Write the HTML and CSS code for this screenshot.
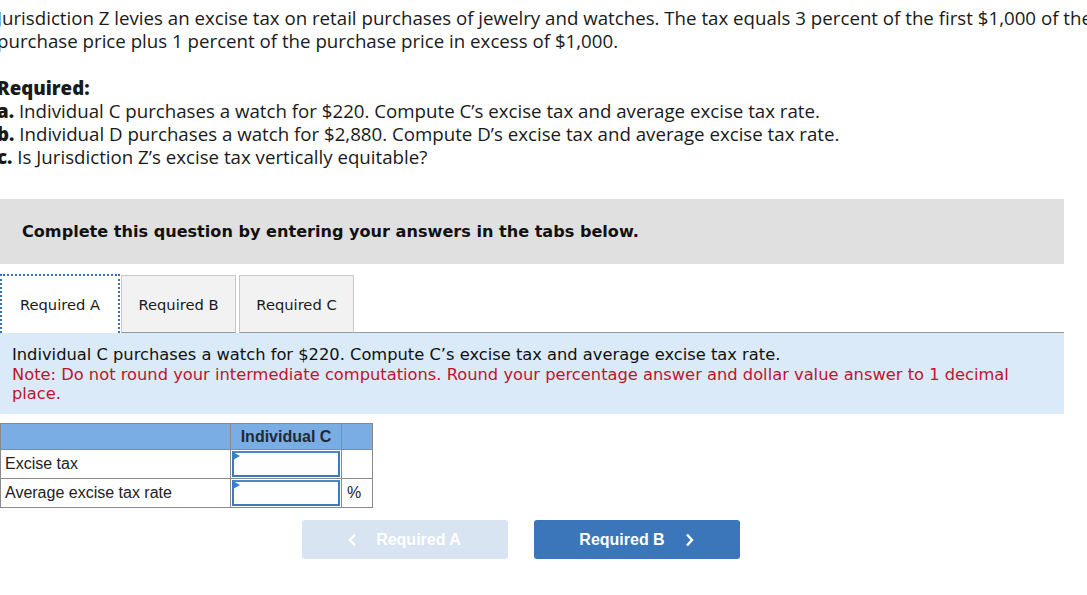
FILE: index.html
```html
<!DOCTYPE html>
<html>
<head>
<meta charset="utf-8">
<link rel="stylesheet" href="styles.css">
</head>
<body>
<div class="page">
  <div class="question">
    <p class="intro">Jurisdiction Z levies an excise tax on retail purchases of jewelry and watches. The tax equals 3 percent of the first $1,000 of the<br>purchase price plus 1 percent of the purchase price in excess of $1,000.</p>
    <p class="req">
      <strong>Required:</strong><br>
      <strong>a.</strong> Individual C purchases a watch for $220. Compute C’s excise tax and average excise tax rate.<br>
      <strong>b.</strong> Individual D purchases a watch for $2,880. Compute D’s excise tax and average excise tax rate.<br>
      <strong>c.</strong> Is Jurisdiction Z’s excise tax vertically equitable?
    </p>
  </div>

  <div class="instructions">Complete this question by entering your answers in the tabs below.</div>

  <div class="tabs">
    <div class="tab active">Required A</div>
    <div class="tab">Required B</div>
    <div class="tab">Required C</div>
    <div class="tab-fill"></div>
  </div>

  <div class="panel">
    <div class="prompt">Individual C purchases a watch for $220. Compute C’s excise tax and average excise tax rate.</div>
    <div class="note">Note: Do not round your intermediate computations. Round your percentage answer and dollar value answer to 1 decimal place.</div>
  </div>

  <table class="answers">
    <tr class="head">
      <th class="label-col"></th>
      <th class="input-col">Individual C</th>
      <th class="unit-col"></th>
    </tr>
    <tr class="row">
      <td class="label">Excise tax</td>
      <td class="cell"><div class="input"></div></td>
      <td class="unit"></td>
    </tr>
    <tr class="row">
      <td class="label">Average excise tax rate</td>
      <td class="cell"><div class="input"></div></td>
      <td class="unit">%</td>
    </tr>
  </table>

  <div class="nav">
    <div class="btn prev"><svg class="chev" width="9" height="14" viewBox="0 0 9 14"><path d="M7 1.5 L2 7 L7 12.5" fill="none" stroke="#fff" stroke-width="2.4"/></svg>Required A</div>
    <div class="btn next">Required B<svg class="chev" width="9" height="14" viewBox="0 0 9 14"><path d="M2 1.5 L7 7 L2 12.5" fill="none" stroke="#fff" stroke-width="2.4"/></svg></div>
  </div>
</div>
</body>
</html>
```
FILE: styles.css
```css
html, body {
  margin: 0;
  padding: 0;
  background: #ffffff;
  overflow: hidden;
}

.page {
  width: 1064px;
}

.question {
  margin-left: -3px;
  font-family: "Open Sans", "Lato", sans-serif;
  font-size: 18.7px;
  line-height: 23px;
  color: #1a1a1a;
  padding-top: 6px;
}

.question p {
  margin: 0;
  white-space: nowrap;
}

.question .req {
  margin-top: 24px;
}

.question strong {
  font-weight: 800;
}

.instructions {
  margin-top: 31px;
  height: 65px;
  background: #e0e0e0;
  display: flex;
  align-items: center;
  padding-left: 22px;
  font-family: "DejaVu Sans", Verdana, sans-serif;
  font-weight: bold;
  font-size: 16.1px;
  color: #111;
  box-sizing: border-box;
}

.tabs {
  margin-top: 10px;
  display: flex;
  align-items: flex-end;
  height: 59px;
}

.tab {
  height: 58px;
  box-sizing: border-box;
  border: 1px solid #c8c8c8;
  border-bottom: 1px solid #999;
  background: #f2f2f2;
  display: flex;
  align-items: center;
  justify-content: center;
  font-family: "DejaVu Sans", Verdana, sans-serif;
  font-size: 14.7px;
  color: #1a1a1a;
  width: 115px;
  margin-right: 3px;
}

.tab.active {
  width: 120px;
  margin-right: 1px;
  height: 59px;
  background: #fff;
  border: 2px dotted #3b6fb4;
  border-bottom: none;
}

.tab-fill {
  flex: 1;
  height: 1px;
  background: #999;
  margin-left: -3px;
}

.panel {
  background: #daeaf8;
  padding: 12px 52px 12px 12px;
  font-family: "DejaVu Sans", Verdana, sans-serif;
  font-size: 16.3px;
  line-height: 19.5px;
  height: 81px;
  box-sizing: border-box;
}

.prompt {
  color: #111;
}

.note {
  color: #c0142e;
}

.answers {
  margin-top: 9px;
  border-collapse: collapse;
  font-family: "Liberation Sans", Arial, sans-serif;
  font-size: 16px;
  color: #222;
}

.answers th, .answers td {
  border: 1px solid #8a8a8a;
  padding: 0;
}

.answers .head th {
  background: #7aade4;
  height: 25px;
  font-weight: bold;
  text-align: center;
  color: #1f2a36;
}

.label-col { width: 229px; }
.input-col { width: 110px; }
.unit-col { width: 30px; }

.answers tr.row {
  height: 29px;
}

.answers td.label {
  padding-left: 4px;
}

.answers td.cell {
  padding: 1px;
  vertical-align: top;
}

.input {
  position: relative;
  height: 26px;
  box-sizing: border-box;
  border: 2px solid #3d79c2;
  border-top-color: #4c86cc;
  background: #fff;
}

.input::before {
  content: "";
  position: absolute;
  left: -1px;
  top: -1px;
  border-top: 4px solid transparent;
  border-bottom: 4px solid transparent;
  border-left: 7px solid #3b7ed0;
}

.answers td.unit {
  padding-left: 5px;
}

.nav {
  margin-top: 12px;
  display: flex;
  justify-content: center;
  gap: 26px;
  padding-right: 23px;
}

.btn {
  width: 206px;
  height: 39px;
  border-radius: 3px;
  display: flex;
  align-items: center;
  justify-content: center;
  font-family: "Liberation Sans", Arial, sans-serif;
  font-weight: bold;
  font-size: 16px;
  color: #fff;
}

.btn.prev {
  background: #d8e4f2;
}

.btn.next {
  background: #3a76b9;
}

.prev .chev {
  margin-right: 19px;
}

.next .chev {
  margin-left: 20px;
}
```
